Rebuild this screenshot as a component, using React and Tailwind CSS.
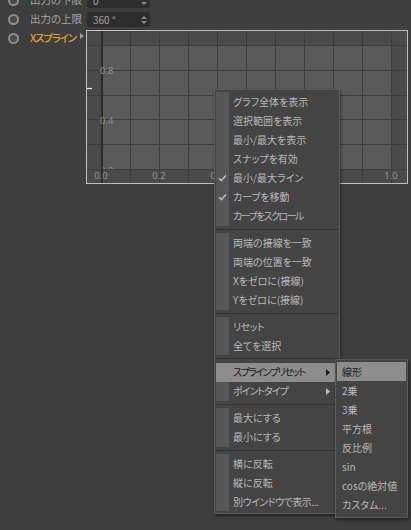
const menuGroups = [
  [
    { label: "グラフ全体を表示" },
    { label: "選択範囲を表示" },
    { label: "最小/最大を表示" },
    { label: "スナップを有効" },
    { label: "最小/最大ライン", checked: true },
    { label: "カーブを移動", checked: true },
    { label: "カーブをスクロール", track: "tracking-[-1.5px]" },
  ],
  [
    { label: "両端の接線を一致" },
    { label: "両端の位置を一致" },
    { label: "Xをゼロに(接線)" },
    { label: "Yをゼロに(接線)" },
  ],
  [{ label: "リセット", track: "tracking-[-0.5px]" }, { label: "全てを選択" }],
  [
    { label: "スプラインプリセット", sub: true, active: true, track: "tracking-[-1.5px]" },
    { label: "ポイントタイプ", sub: true, track: "tracking-[-1px]" },
  ],
  [{ label: "最大にする" }, { label: "最小にする" }],
  [{ label: "横に反転" }, { label: "縦に反転" }, { label: "別ウインドウで表示...", track: "tracking-[-0.5px]" }],
];

const presets = ["線形", "2乗", "3乗", "平方根", "反比例", "sin", "cosの絶対値", "カスタム..."];

const Radio = () => (
  <div className="w-[11px] h-[11px] rounded-full border-[2px] border-[#8d8d8d] bg-[#4b4b4b] shrink-0" />
);

const Spinner = ({ onlyDown }) => (
  <svg width="6" height="10" viewBox="0 0 6 10" className="shrink-0">
    {!onlyDown && <path d="M0 4 L3 1 L6 4 Z" fill="#8a8a8a" />}
    <path d="M0 6 L3 9 L6 6 Z" fill="#8a8a8a" />
  </svg>
);

const ValueRow = ({ label, value, onlyDown }) => (
  <div className="flex h-[19px] items-center pl-[8px]">
    <Radio />
    <span className="ml-[11px] w-[57px] text-[10.5px] leading-none text-[#a3a3a3] whitespace-nowrap">
      {label}
    </span>
    <div className="flex h-[15px] w-[63px] items-center justify-between rounded-[2px] bg-[#2d2d2d] pl-[6px] pr-[3px]">
      <span className="text-[10px] leading-none text-[#a3a3a3]">{value}</span>
      <Spinner onlyDown={onlyDown} />
    </div>
  </div>
);

const Graph = () => {
  const W = 322;
  const H = 154;
  const x0 = 15;
  const x1 = 305;
  const y0 = 15;
  const y1 = 139;
  const xs = Array.from({ length: 11 }, (_, i) => x0 + i * 29);
  const ys = Array.from({ length: 6 }, (_, i) => y0 + i * 24.8);
  const font = "'Noto Sans', 'Liberation Sans', sans-serif";
  return (
    <svg width={W} height={H} className="block">
      <rect x="0" y="0" width={W} height={H} fill="#4a4a4a" />
      <rect x={x0} y={y0} width={x1 - x0} height={y1 - y0} fill="#5a5a5a" />
      <text x="14" y="143.5" fontSize="9.5" fill="#8e8e8e" fontFamily={font}>0.0</text>
      <rect x="0" y={y1} width={W} height={H - y1} fill="#4a4a4a" />
      {xs.map((x) => (
        <line key={x} x1={x + 0.5} y1="0" x2={x + 0.5} y2={H} stroke="#3d3d3d" strokeWidth="1" />
      ))}
      {ys.map((y) => (
        <line key={y} x1="0" y1={Math.round(y) + 0.5} x2={W} y2={Math.round(y) + 0.5} stroke="#3d3d3d" strokeWidth="1" />
      ))}
      <line x1={x0 + 1} y1="0" x2={x0 + 1} y2={H} stroke="#2c2c2c" strokeWidth="2" />
      <text x="14" y="44" fontSize="9.5" fill="#8e8e8e" fontFamily={font}>0.8</text>
      <text x="14" y="93.5" fontSize="9.5" fill="#8e8e8e" fontFamily={font}>0.4</text>
      {xs
        .filter((_, i) => i % 2 === 0)
        .map((x, i) => (
          <text key={x} x={x} y="148.5" fontSize="9.5" fill="#8e8e8e" textAnchor="middle" fontFamily={font}>
            {(i * 0.2).toFixed(1)}
          </text>
        ))}
      <line x1="1" y1="58.5" x2="6" y2="58.5" stroke="#e8e8e8" strokeWidth="1.2" />
      <rect x="0.5" y="0.5" width={W - 1} height={H - 1} fill="none" stroke="#bdbdbd" strokeWidth="1" />
    </svg>
  );
};

const Check = () => (
  <svg width="9" height="8" viewBox="0 0 9 8">
    <path d="M1 4.2 L3.4 6.6 L8 1.4" fill="none" stroke="#bdbdbd" strokeWidth="1.5" />
  </svg>
);

const Arrow = ({ dark }) => (
  <svg width="4" height="7" viewBox="0 0 4 7" className="mr-[8px] shrink-0">
    <path d="M0 0 L4 3.5 L0 7 Z" fill={dark ? "#1c1c1c" : "#bdbdbd"} />
  </svg>
);

const MenuItem = ({ item }) => (
  <div
    className={`flex h-[19.1px] items-center ${
      item.active ? "bg-[#8d8d8d] text-[#1b1b1b]" : "text-[#b8b8b8]"
    }`}
  >
    <div
      className={`flex h-full w-[13px] shrink-0 items-center justify-center ${
        item.active ? "" : "bg-[#565656]"
      }`}
    >
      {item.checked && <Check />}
    </div>
    <span className={`flex-1 pl-[4px] leading-none whitespace-nowrap ${item.track || ""}`}>{item.label}</span>
    {item.sub && <Arrow dark={item.active} />}
  </div>
);

export default function App() {
  return (
    <div className="relative h-[530px] w-[411px] overflow-hidden bg-[#3e3e3e] font-['Noto_Sans_CJK_JP','Noto_Sans',sans-serif] [font-feature-settings:'palt']">
      <div className="-mt-[9px] flex flex-col">
        <ValueRow label="出力の下限" value="0" onlyDown />
        <ValueRow label="出力の上限" value="360 °" />
        <div className="flex">
          <div className="flex h-[19px] w-[86px] shrink-0 items-center pl-[8px]">
            <Radio />
            <span className="ml-[11px] w-[50px] text-[10.5px] leading-none font-medium tracking-[-1.2px] text-[#e3a036] whitespace-nowrap">
              Xスプライン
            </span>
            <svg width="4" height="6" viewBox="0 0 4 6" className="-mt-[6px]">
              <path d="M0 0 L4 3 L0 6 Z" fill="#a0a0a0" />
            </svg>
          </div>
          <div className="mt-[1px]">
            <Graph />
          </div>
        </div>
      </div>

      <div className="absolute left-[214px] top-[89px] w-[126px] border border-[#5a5a5a] bg-[#444444] px-[1px] pt-[2px] pb-[2px] text-[10px] shadow-[1px_2px_3px_rgba(0,0,0,0.45)]">
        {menuGroups.map((group, gi) => (
          <div key={gi}>
            {gi > 0 && (
              <div className="flex h-[7.5px] items-center">
                <div className="h-px w-full bg-[#333333]" />
              </div>
            )}
            {group.map((item) => (
              <MenuItem key={item.label} item={item} />
            ))}
          </div>
        ))}
      </div>

      <div className="absolute left-[335px] top-[359px] w-[73px] border border-[#5a5a5a] bg-[#444444] px-[1px] pt-[2px] pb-[2px] text-[10px] shadow-[1px_2px_3px_rgba(0,0,0,0.45)]">
        {presets.map((p, i) => (
          <div
            key={p}
            className={`flex h-[19.1px] items-center pl-[5px] leading-none whitespace-nowrap ${
              i === 0 ? "bg-[#8d8d8d] text-[#1b1b1b]" : "text-[#b8b8b8]"
            }`}
          >
            {p}
          </div>
        ))}
      </div>
    </div>
  );
}
